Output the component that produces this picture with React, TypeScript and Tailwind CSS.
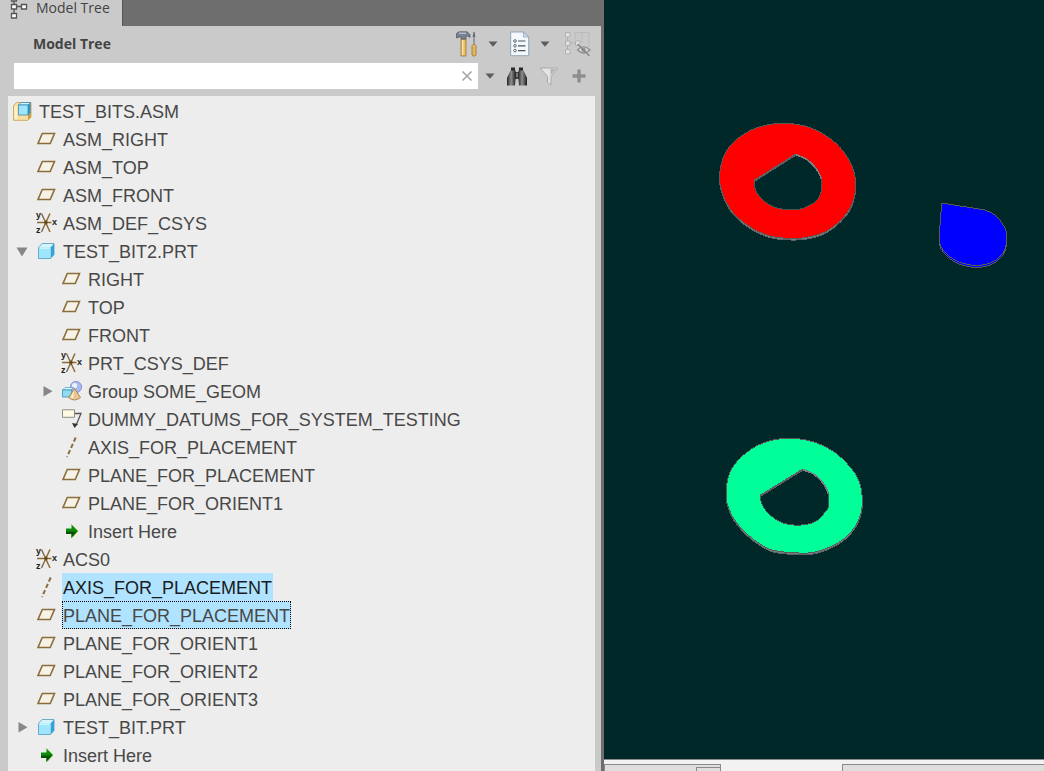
import { useState } from "react";
import type { ReactNode } from "react";

type IconName = "plane" | "csys" | "part" | "group" | "note" | "axis" | "insert";

type TreeNode = {
    label: string;
    icon: IconName;
    expandable?: boolean;
    highlight?: "selected" | "focused";
    children?: TreeNode[];
};

const nodes: TreeNode[] = [
    { label: "ASM_RIGHT", icon: "plane" },
    { label: "ASM_TOP", icon: "plane" },
    { label: "ASM_FRONT", icon: "plane" },
    { label: "ASM_DEF_CSYS", icon: "csys" },
    {
        label: "TEST_BIT2.PRT",
        icon: "part",
        expandable: true,
        children: [
            { label: "RIGHT", icon: "plane" },
            { label: "TOP", icon: "plane" },
            { label: "FRONT", icon: "plane" },
            { label: "PRT_CSYS_DEF", icon: "csys" },
            { label: "Group SOME_GEOM", icon: "group", expandable: true },
            { label: "DUMMY_DATUMS_FOR_SYSTEM_TESTING", icon: "note" },
            { label: "AXIS_FOR_PLACEMENT", icon: "axis" },
            { label: "PLANE_FOR_PLACEMENT", icon: "plane" },
            { label: "PLANE_FOR_ORIENT1", icon: "plane" },
            { label: "Insert Here", icon: "insert" },
        ],
    },
    { label: "ACS0", icon: "csys" },
    { label: "AXIS_FOR_PLACEMENT", icon: "axis", highlight: "selected" },
    { label: "PLANE_FOR_PLACEMENT", icon: "plane", highlight: "focused" },
    { label: "PLANE_FOR_ORIENT1", icon: "plane" },
    { label: "PLANE_FOR_ORIENT2", icon: "plane" },
    { label: "PLANE_FOR_ORIENT3", icon: "plane" },
    { label: "TEST_BIT.PRT", icon: "part", expandable: true },
    { label: "Insert Here", icon: "insert" },
];

const glyphs: Record<IconName, ReactNode> = {
    plane: (
        <path d="M6.3 4.5H18.5L14.2 14.5H2Z" fill="#f6f2e8" stroke="#8a6d3b" strokeWidth="1.6" />
    ),
    csys: (
        <>
            <path d="M1 9.5H15.5M5.5 .5L14 19M14 .5L5.5 19" stroke="#8a6d3b" strokeWidth="1.5" fill="none" />
            <path d="M8 9.5H12M10 7.5V11.5" stroke="#5e4417" strokeWidth="1.4" />
            <g fill="#222" fontFamily="Liberation Sans, sans-serif" fontSize="9" fontWeight="bold">
                <text x="0" y="4.5">y</text>
                <text x="0" y="20">z</text>
                <text x="16" y="12">x</text>
            </g>
        </>
    ),
    part: (
        <>
            <path d="M2.5 6.5L6 2.5H18L14.5 6.5Z" fill="#d3f3fd" />
            <path d="M14.5 6.5L18 2.5V13.5L14.5 17.5Z" fill="#31a3d8" />
            <path d="M2.5 6.5H14.5V17.5H2.5Z" fill="#9fe6fd" />
            <path d="M3.5 7.5H13.5" stroke="#c8f3ff" />
            <path d="M2.5 6.5L6 2.5H18V13.5L14.5 17.5H2.5Z" fill="none" stroke="#4a9cc0" strokeWidth=".8" />
        </>
    ),
    group: (
        <>
            <circle cx="15" cy="6" r="5.6" fill="#a9b8ee" stroke="#7b88c8" strokeWidth=".8" />
            <circle cx="13.6" cy="4.5" r="2.6" fill="#edf1ff" />
            <path d="M1.5 9L4 6.5H12.5L10 9Z" fill="#d3f3fd" stroke="#3b93b8" strokeWidth=".6" />
            <path d="M1.5 9H10.5V16H1.5Z" fill="#8edcf6" stroke="#3b93b8" strokeWidth=".8" />
            <path d="M13.5 7.5L19.5 16.5Q13.5 21.5 7.500 16.5Z" fill="#e8c795" stroke="#9a7440" strokeWidth=".8" />
            <path d="M13 9.5L9.8 16.6L12 17.6Z" fill="#fff1d6" />
        </>
    ),
    note: (
        <>
            <path d="M1.5 .8H13.5V8.3H1.5Z" fill="#fffbe3" stroke="#8c8c80" />
            <path d="M14 4.5H20L15.2 16" fill="none" stroke="#555" strokeWidth="1.3" />
            <path d="M11 14L17 15L13.5 19Z" fill="#333" />
        </>
    ),
    axis: (
        <path d="M14.7 .5L6 20" stroke="#8a6d3b" strokeWidth="2" strokeDasharray="4.5 2.4" />
    ),
    insert: (
        <>
            <path d="M5 7.5H10.5V3.5L17 10L10.5 17V13H5Z" fill="#0c8c0c" />
            <path d="M5 10.5H16.5L10.5 17V13H5Z" fill="#0b5206" />
            <path d="M10.5 3.5L17 10L11.5 16" fill="none" stroke="#69c51c" strokeWidth=".8" />
        </>
    ),
};

function TreeRow({ node }: { node: TreeNode }) {
    const [open, setOpen] = useState(true);
    const labelStyle =
        node.highlight === "selected"
            ? "bg-[#afe3ff] text-[#1c1c1c]"
            : node.highlight === "focused"
              ? "bg-[#afe3ff] outline-1 -outline-offset-1 outline-dotted outline-black"
              : "";

    return (
        <li>
            <div className="flex h-7 items-center">
                {node.expandable ? (
                    <button
                        type="button"
                        aria-label={`Toggle ${node.label}`}
                        className="mr-2 h-5 w-3"
                        onClick={() => setOpen(!open)}
                    >
                        <svg viewBox="0 0 12 20" className="h-5 w-3" fill="#878787">
                            {node.children && open ? <path d="M.5 6.5H11.5L6 15.5Z" /> : <path d="M2.5 5V15.5L11.5 10.3Z" />}
                        </svg>
                    </button>
                ) : (
                    <span className="mr-2 w-3" />
                )}
                <svg viewBox="0 0 22 20" className="mr-1 h-5 w-[22px] overflow-visible">
                    {glyphs[node.icon]}
                </svg>
                <span className={`px-px pt-0.5 leading-[26px] whitespace-nowrap ${labelStyle}`}>{node.label}</span>
            </div>
            {node.children && open && (
                <ul className="pl-[25px]">
                    {node.children.map((child) => (
                        <TreeRow key={child.label} node={child} />
                    ))}
                </ul>
            )}
        </li>
    );
}

function Caret({ label }: { label: string }) {
    return (
        <button type="button" aria-label={label} className="h-6 w-2.5">
            <svg viewBox="0 0 10 24" className="h-6 w-2.5">
                <path d="M.5 9.5H9.5L5 14.7Z" fill="#5c5c5c" />
            </svg>
        </button>
    );
}

function Toolbar() {
    return (
        <div className="flex h-9 items-center pr-[9px] pl-[33px]">
            <h1 className="flex-1 font-['Open_Sans',sans-serif] text-sm font-bold">Model Tree</h1>
            <div className="flex items-center gap-3">
                <div className="flex items-center gap-2.5">
                    <button type="button" aria-label="Settings">
                        <svg viewBox="0 0 22 26" className="h-[26px] w-[22px]">
                            <path d="M5 8H10V25H5Z" fill="#e8bd62" stroke="#9b7433" strokeWidth=".8" />
                            <path d="M6.7 9V24" stroke="#fbe3a5" strokeWidth="1.4" />
                            <path d="M.5 2.5L3 .8H11L14 3.5V6.5L11.5 5L10 5.5V8H5V5.5L.5 7Z" fill="#778191" stroke="#4d5563" strokeWidth=".7" />
                            <path d="M3 2.2H10" stroke="#d3dae5" />
                            <path d="M18 1V13" stroke="#7d8794" strokeWidth="1.4" />
                            <path d="M18 .5L19.5 6H16.5Z" fill="#626c7c" />
                            <path d="M16 14.5L17 13.5H19L20 14.5V24L19 25H17L16 24Z" fill="#e4b75c" stroke="#9b7433" strokeWidth=".8" />
                        </svg>
                    </button>
                    <Caret label="Settings menu" />
                </div>
                <div className="flex items-center gap-2.5">
                    <button type="button" aria-label="Show">
                        <svg viewBox="0 0 20 26" className="h-[26px] w-5">
                            <path d="M.7 1H13.5L18.7 6V24.7H.7Z" fill="#f3f8fd" stroke="#93a5b6" />
                            <path d="M13.5 1V6H18.7Z" fill="#cddceb" stroke="#93a5b6" strokeWidth=".8" />
                            <path d="M8 10H15.500M8 14.8H15.5M8 19.6H15.5" stroke="#4b5560" strokeWidth="1.2" />
                            <g fill="#fff" stroke="#4b5560" strokeWidth=".9">
                                <circle cx="5" cy="10" r="1.3" />
                                <circle cx="5" cy="14.8" r="1.3" />
                                <circle cx="5" cy="19.6" r="1.3" />
                            </g>
                        </svg>
                    </button>
                    <Caret label="Show menu" />
                </div>
                <button type="button" aria-label="Hide columns" disabled>
                    <svg viewBox="0 0 30 26" className="h-[26px] w-[30px]" fill="none">
                        <path d="M13 1.5H27V16M20 1.5V12M13 1.5V9" stroke="#bababa" />
                        <path d="M5.5 6V20M8 12H13" stroke="#b0b0b0" />
                        <g fill="#e2e2e2" stroke="#b0b0b0">
                            <path d="M3.5 1.5H8V6H3.5Z" />
                            <path d="M3.5 10H8V14.5H3.5Z" />
                            <path d="M3.5 18.5H8V23H3.5Z" />
                            <path d="M13.5 10H18V14.5H13.5Z" />
                        </g>
                        <path d="M15.5 19Q21.5 12.5 28 19Q21.5 25 15.5 19Z" fill="#d6d6d6" stroke="#8b8b8b" strokeWidth="1.2" />
                        <circle cx="21.5" cy="18.8" r="2.3" fill="#999" />
                        <path d="M15.5 13L27.5 25" stroke="#858585" strokeWidth="1.3" />
                    </svg>
                </button>
            </div>
        </div>
    );
}

function SearchBar() {
    const [query, setQuery] = useState("");

    return (
        <div className="mt-px flex items-center gap-3 px-3.5">
            <div className="flex flex-1 items-center gap-[7px]">
                <div className="flex h-[26px] flex-1 items-center bg-white pr-[5px]">
                    <input
                        type="text"
                        aria-label="Search model tree"
                        value={query}
                        onChange={(e) => setQuery(e.target.value)}
                        className="h-full min-w-0 flex-1 px-2 text-base outline-none"
                    />
                    <button type="button" aria-label="Clear search" onClick={() => setQuery("")}>
                        <svg viewBox="0 0 12 12" className="size-3">
                            <path d="M1.5 1.5L10.5 10.5M10.5 1.5L1.5 10.5" stroke="#a3a3a3" strokeWidth="1.5" />
                        </svg>
                    </button>
                </div>
                <Caret label="Search options" />
            </div>
            <button type="button" aria-label="Find">
                <svg viewBox="0 0 20 20" className="size-5">
                    <defs>
                        <linearGradient id="barrel">
                            <stop offset="0" stopColor="#222" />
                            <stop offset=".45" stopColor="#8f8f8f" />
                            <stop offset="1" stopColor="#1c1c1c" />
                        </linearGradient>
                    </defs>
                    <path d="M4 1.5H8V5H4Z M12 1.5H16V5H12Z" fill="#2b2b2b" />
                    <path d="M7 6H13V13H7Z" fill="#444" />
                    <path d="M3.5 4.5H8.5L9 8L8 19.500H0V12Z" fill="url(#barrel)" />
                    <path d="M11.5 4.5H16.5L20 12V19.500H12L11 8Z" fill="url(#barrel)" />
                    <path d="M10 7V11" stroke="#aaa" />
                </svg>
            </button>
            <button type="button" aria-label="Filter" disabled>
                <svg viewBox="0 0 20 20" className="size-5">
                    <path d="M1 2H19L12 10.5V19L8.5 16.5V10.5Z" fill="#e4e4e4" stroke="#a9a9a9" />
                    <path d="M11.5 3H17L11.5 9.5Z" fill="#b5b5b5" />
                </svg>
            </button>
            <button type="button" aria-label="Add" disabled>
                <svg viewBox="0 0 16 16" className="size-4">
                    <path d="M8 1.5V14.5M1.5 8H14.5" stroke="#8e8e8e" strokeWidth="3.4" />
                </svg>
            </button>
        </div>
    );
}

function ModelTree() {
    return (
        <div className="mt-[7px] mr-1.5 ml-2 flex-1 bg-[#ededed] pt-px text-[18px] text-[#484848]">
            <div className="flex h-7 items-center pl-1">
                <svg viewBox="0 0 22 20" className="mr-1 h-5 w-[22px]">
                    <path d="M1.5 4.5L4.5 1.500H19V16L16 19.3H1.5Z" fill="#fbe0a6" stroke="#d0aa68" />
                    <path d="M16 6V19L18.8 16V3Z" fill="#cf9b48" />
                    <path d="M2.5 6H5V18.3H2.5Z" fill="#fff0cc" />
                    <path d="M6.5 4L9 1.5H18.5L16 4Z" fill="#d8f5ff" stroke="#3489b3" strokeWidth=".8" />
                    <path d="M16 4L18.5 1.5V11.5L16 14Z" fill="#2f93c7" />
                    <path d="M6.5 4H16V14H6.5Z" fill="#9fe6fd" stroke="#3489b3" strokeWidth=".8" />
                </svg>
                <span className="px-px pt-0.5 leading-[26px]">TEST_BITS.ASM</span>
            </div>
            <ul className="pl-2">
                {nodes.map((node) => (
                    <TreeRow key={node.label + node.icon} node={node} />
                ))}
            </ul>
        </div>
    );
}

type Point = [number, number];

// Part outlines, three units per pixel
const redOuter: Point[] = [[58, 213], [62, 170], [78, 125], [108, 90], [152, 61], [200, 45], [245, 40], [275, 41], [325, 51], [375, 75], [418, 110], [450, 155], [466, 205], [464, 255], [447, 300], [412, 340], [370, 368], [320, 382], [270, 385], [210, 378], [150, 351], [100, 309], [72, 262]];
const redInner: Point[] = [[162, 213], [287, 134], [320, 148], [348, 175], [364, 205], [364, 240], [355, 265], [335, 283], [300, 297], [258, 299], [215, 288], [182, 264], [165, 235]];
const greenOuter: Point[] = [[50, 230], [50, 178], [66, 130], [98, 92], [145, 60], [195, 44], [240, 40], [265, 41], [315, 52], [365, 76], [408, 112], [441, 155], [455, 200], [455, 255], [435, 305], [400, 343], [355, 368], [310, 382], [265, 384], [190, 376], [140, 350], [95, 311], [65, 270]];
const greenInner: Point[] = [[150, 213], [278, 134], [312, 148], [340, 175], [355, 205], [355, 245], [342, 265], [320, 287], [290, 298], [250, 300], [210, 290], [175, 265], [156, 237]];
const blueShape: Point[] = [[65, 39], [195, 60], [225, 75], [245, 98], [257, 120], [260, 150], [253, 182], [235, 204], [205, 221], [165, 226], [120, 217], [85, 196], [62, 168], [57, 145]];

// Curve through every point, starting where the path already is
function curve(points: Point[]) {
    return points
        .slice(1)
        .map((p, i) => {
            const before = points[i - 1] ?? points[i];
            const from = points[i];
            const after = points[i + 2] ?? p;
            const c1 = [from[0] + (p[0] - before[0]) / 6, from[1] + (p[1] - before[1]) / 6];
            const c2 = [p[0] - (after[0] - from[0]) / 6, p[1] - (after[1] - from[1]) / 6];
            return `C${c1} ${c2} ${p}`;
        })
        .join("");
}

function cornered(points: Point[], closeWithCurve: boolean) {
    const rest = points.slice(1);
    return `M${points[0]}L${rest[0]}${curve(closeWithCurve ? [...rest, points[0]] : rest)}Z`;
}

function Ring({ outer, inner, fill }: { outer: Point[]; inner: Point[]; fill: string }) {
    const rim = `M${outer[0]}${curve([...outer, outer[0]])}Z`;
    const edge = inner.slice(1, 5);

    return (
        <>
            <path d={rim} transform="translate(0 5)" fill="#777f84" stroke="#5c6163" strokeWidth="3" />
            <path d={rim} fill={fill} stroke="#5a5a5a" strokeWidth="3" />
            <path d={cornered(inner, true)} fill="#002828" stroke="#4a5555" strokeWidth="3" />
            <path d={`M${inner[0]}L${edge[0]}`} fill="none" stroke="#5f5f63" strokeWidth="6" />
            <path d={`M${edge[0]}${curve(edge)}`} fill="none" stroke="#777f84" strokeWidth="5" />
        </>
    );
}

function Viewport() {
    return (
        <main className="flex min-w-0 flex-1 flex-col bg-[#002828]">
            <div className="flex-1">
                <svg viewBox="0 0 440 740" className="w-full" shapeRendering="crispEdges" role="img" aria-label="Model view">
                    <g transform="translate(96 110) scale(.33333)">
                        <Ring outer={redOuter} inner={redInner} fill="#ff0000" />
                    </g>
                    <g transform="translate(316 190) scale(.33333)" fill="#0000ff" stroke="#5a5a5a" strokeWidth="3">
                        <path d={cornered(blueShape, false)} transform="translate(0 6)" />
                        <path d={cornered(blueShape, false)} />
                    </g>
                    <g transform="translate(106 425) scale(.33333)">
                        <Ring outer={greenOuter} inner={greenInner} fill="#00ff99" />
                    </g>
                </svg>
            </div>
            <footer className="flex h-3 items-end justify-between border-t border-[#8a8a8a] bg-[#f2f2f2]">
                <div className="flex h-[7px] w-[117px] items-end justify-end border-x border-t border-[#8a8a8a] bg-[#dedede]">
                    <div className="h-1 w-6 border-t border-l border-[#8a8a8a]" />
                </div>
                <div className="h-[7px] w-[202px] border-t border-l border-[#8a8a8a] bg-[#dedede]" />
            </footer>
        </main>
    );
}

export default function App() {
    return (
        <div className="flex min-h-screen bg-[#cacaca] font-['Liberation_Sans',Arial,sans-serif] text-[#444]">
            <aside className="flex w-[604px] shrink-0 flex-col border-r-3 border-[#6e6e6e]">
                <div className="flex h-[26px] bg-[#6e6e6e]">
                    <button
                        type="button"
                        className="flex h-full w-[123px] items-start border-r border-[#555] bg-[#cacaca] pl-2.5 font-['Open_Sans',sans-serif] text-sm leading-4"
                    >
                        <svg viewBox="0 0 18 20" className="mr-2 h-5 w-[18px]" fill="#fff" stroke="#555" strokeWidth="1.3">
                            <path d="M4 0V13M6.5 6.5H11.5" />
                            <path d="M1.5 -3.5H6.5V1H1.5Z" />
                            <path d="M1.5 4.5H6.5V9H1.5Z" />
                            <path d="M1.5 13.5H6.5V18H1.5Z" />
                            <path d="M11.5 4.5H16.5V9H11.5Z" />
                        </svg>
                        Model Tree
                    </button>
                </div>
                <Toolbar />
                <SearchBar />
                <ModelTree />
            </aside>
            <Viewport />
        </div>
    );
}
